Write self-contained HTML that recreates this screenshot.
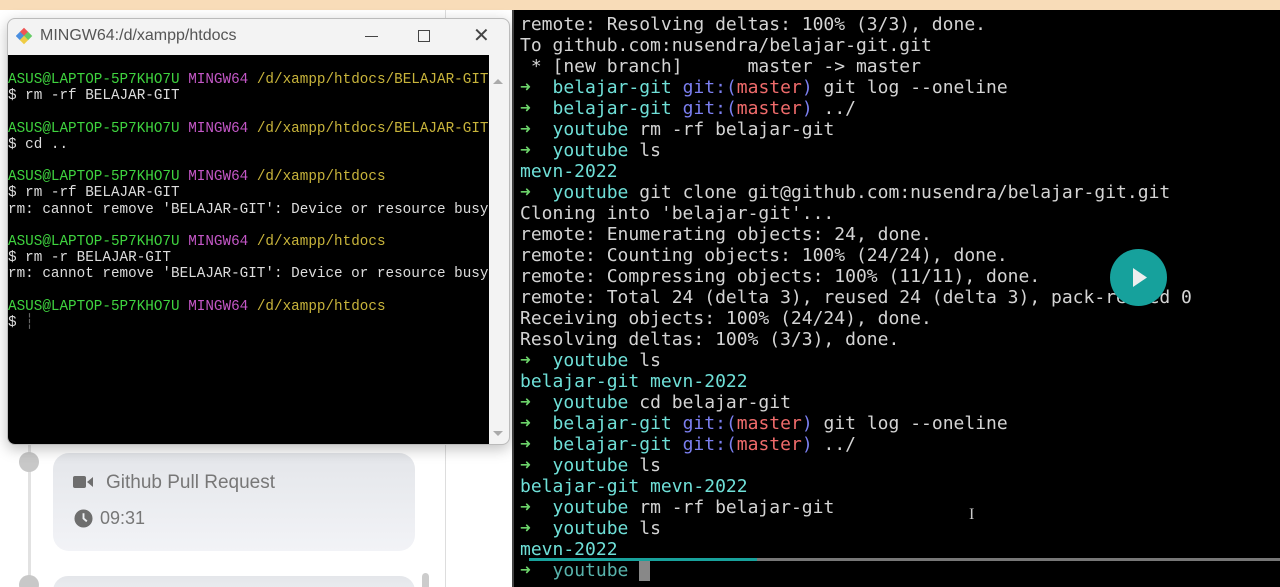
<!DOCTYPE html>
<html><head><style>
html,body{margin:0;width:1280px;height:587px;overflow:hidden}
body{background:#fff;position:relative;font-family:"Liberation Sans",sans-serif}
.strip{position:absolute;left:0;top:0;width:1280px;height:10px;background:#f8dcb8}
.video{position:absolute;left:512px;top:10px;width:768px;height:577px;background:#000;border-left:2px solid #444;box-sizing:border-box;overflow:hidden}
.vt{position:absolute;left:6px;top:4px;font-family:"DejaVu Sans Mono","Liberation Mono",monospace;font-size:18px;line-height:21px;color:#d4d4d4;white-space:pre}
.c{color:#6fe0d8}.g{color:#6cd36a}.b{color:#7b7ff0}.r{color:#ef6b6b}
.play{position:absolute;left:596px;top:239px;width:57px;height:57px;border-radius:50%;background:#16a19c}
.prog{position:absolute;left:15px;top:548px;width:760px;height:3px;background:#777}
.prog i{position:absolute;left:0;top:0;width:228px;height:3px;background:#18a29c}
.vline{position:absolute;left:445px;top:10px;width:1px;height:577px;background:#ddd}
.tl{position:absolute;left:28px;top:440px;width:3px;height:147px;background:#e2e2e2}
.dot{position:absolute;left:19px;width:20px;height:20px;border-radius:50%;background:#c8c8c8}
.card{position:absolute;left:53px;width:362px;border-radius:16px;background:linear-gradient(#e4e6ea,#f2f3f7)}
.win{position:absolute;left:7px;top:18px;width:501px;height:425px;background:#f3f3f3;border:1px solid #bbb;border-radius:8px;box-shadow:0 4px 14px rgba(0,0,0,.25);overflow:hidden}
.title{position:absolute;left:32px;top:8px;font-size:16px;color:#555}
.term{position:absolute;left:0;top:36px;width:481px;height:389px;background:#000;font-family:"Liberation Mono",monospace;font-size:14.3px;line-height:16.2px;color:#ddd;white-space:pre;padding-top:17px;box-sizing:border-box;overflow:hidden}
.tg{color:#3fd43f}.tm{color:#c457c7}.ty{color:#c8b43b}
</style></head><body>
<div class="strip"></div>
<div class="vline"></div>
<div class="tl"></div>
<div class="dot" style="top:452px"></div>
<div class="dot" style="top:575px"></div>
<div class="card" style="top:453px;height:98px">
 <svg style="position:absolute;left:20px;top:21px" width="22" height="16" viewBox="0 0 22 16"><rect x="0" y="2" width="13" height="12" rx="2" fill="#6e6e6e"/><path d="M14 8l6-5v10z" fill="#6e6e6e"/></svg>
 <div style="position:absolute;left:53px;top:19px;font-size:19px;color:#777">Github Pull Request</div>
 <svg style="position:absolute;left:21px;top:56px" width="19" height="19" viewBox="0 0 20 20"><circle cx="10" cy="10" r="9.5" fill="#6e6e6e"/><path d="M10 4.5V10l3.5 3" stroke="#eef0f3" stroke-width="2" fill="none"/></svg>
 <div style="position:absolute;left:47px;top:55px;font-size:18px;color:#777">09:31</div>
</div>
<div class="card" style="top:576px;height:30px"></div>
<div style="position:absolute;left:422px;top:573px;width:7px;height:20px;border-radius:4px;background:#ccc"></div>

<div class="video">
<div class="vt">remote: Resolving deltas: 100% (3/3), done.
To github.com:nusendra/belajar-git.git
 * [new branch]      master -> master
<span class="g">➜</span>  <span class="c">belajar-git</span> <span class="b">git:(</span><span class="r">master</span><span class="b">)</span> git log --oneline
<span class="g">➜</span>  <span class="c">belajar-git</span> <span class="b">git:(</span><span class="r">master</span><span class="b">)</span> ../
<span class="g">➜</span>  <span class="c">youtube</span> rm -rf belajar-git
<span class="g">➜</span>  <span class="c">youtube</span> ls
<span class="c">mevn-2022</span>
<span class="g">➜</span>  <span class="c">youtube</span> git clone git@github.com:nusendra/belajar-git.git
Cloning into 'belajar-git'...
remote: Enumerating objects: 24, done.
remote: Counting objects: 100% (24/24), done.
remote: Compressing objects: 100% (11/11), done.
remote: Total 24 (delta 3), reused 24 (delta 3), pack-reused 0
Receiving objects: 100% (24/24), done.
Resolving deltas: 100% (3/3), done.
<span class="g">➜</span>  <span class="c">youtube</span> ls
<span class="c">belajar-git mevn-2022</span>
<span class="g">➜</span>  <span class="c">youtube</span> cd belajar-git
<span class="g">➜</span>  <span class="c">belajar-git</span> <span class="b">git:(</span><span class="r">master</span><span class="b">)</span> git log --oneline
<span class="g">➜</span>  <span class="c">belajar-git</span> <span class="b">git:(</span><span class="r">master</span><span class="b">)</span> ../
<span class="g">➜</span>  <span class="c">youtube</span> ls
<span class="c">belajar-git mevn-2022</span>
<span class="g">➜</span>  <span class="c">youtube</span> rm -rf belajar-git
<span class="g">➜</span>  <span class="c">youtube</span> ls
<span class="c">mevn-2022</span>
<span class="g">➜</span>  <span class="c" style="opacity:.8">youtube</span> <span style="background:#888"> </span></div>
<div class="prog"><i></i></div>
<div class="play"><svg width="57" height="57" viewBox="0 0 57 57"><path d="M23 19l14 9.5-14 9.5z" fill="#eee"/></svg></div>
<div style="position:absolute;left:455px;top:496px;color:#ccc;font-size:16px;font-family:'Liberation Serif',serif">I</div>
</div>

<div class="win">
 <svg style="position:absolute;left:8px;top:8px" width="20" height="20" viewBox="0 0 20 20"><rect x="5" y="2" width="6" height="6" fill="#e55" transform="rotate(45 8 5)"/><rect x="1" y="6" width="6" height="6" fill="#4a8fe0" transform="rotate(45 4 9)"/><rect x="9" y="6" width="6" height="6" fill="#6c6" transform="rotate(45 12 9)"/><rect x="5" y="10" width="6" height="6" fill="#ec4" transform="rotate(45 8 13)"/></svg>
 <div class="title">MINGW64:/d/xampp/htdocs</div>
 <div style="position:absolute;left:357px;top:17px;width:13px;height:1px;background:#444"></div>
 <div style="position:absolute;left:410px;top:11px;width:10px;height:10px;border:1px solid #444"></div>
 <div style="position:absolute;left:465px;top:4px;font-size:20px;color:#444">✕</div>
 <div class="term"><span class="tg">ASUS@LAPTOP-5P7KHO7U</span> <span class="tm">MINGW64</span> <span class="ty">/d/xampp/htdocs/BELAJAR-GIT</span>
$ rm -rf BELAJAR-GIT

<span class="tg">ASUS@LAPTOP-5P7KHO7U</span> <span class="tm">MINGW64</span> <span class="ty">/d/xampp/htdocs/BELAJAR-GIT</span>
$ cd ..

<span class="tg">ASUS@LAPTOP-5P7KHO7U</span> <span class="tm">MINGW64</span> <span class="ty">/d/xampp/htdocs</span>
$ rm -rf BELAJAR-GIT
rm: cannot remove 'BELAJAR-GIT': Device or resource busy

<span class="tg">ASUS@LAPTOP-5P7KHO7U</span> <span class="tm">MINGW64</span> <span class="ty">/d/xampp/htdocs</span>
$ rm -r BELAJAR-GIT
rm: cannot remove 'BELAJAR-GIT': Device or resource busy

<span class="tg">ASUS@LAPTOP-5P7KHO7U</span> <span class="tm">MINGW64</span> <span class="ty">/d/xampp/htdocs</span>
$ <span style="color:#666">┆</span></div>
 <div style="position:absolute;left:485px;top:60px;width:0;height:0;border:5px solid transparent;border-bottom-color:#aaa;border-top:0"></div>
 <div style="position:absolute;left:485px;top:412px;width:0;height:0;border:5px solid transparent;border-top-color:#aaa;border-bottom:0"></div>
</div>
</body></html>
